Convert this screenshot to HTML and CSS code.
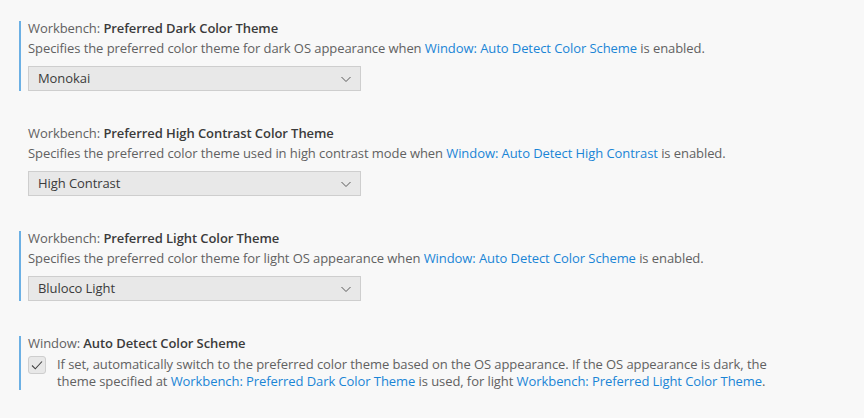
FILE: index.html
```html
<!DOCTYPE html>
<html>
<head>
<meta charset="utf-8">
<link rel="stylesheet" href="styles.css">
</head>
<body>
<div class="settings">
  <div class="setting modified">
    <div class="title"><span class="cat">Workbench: </span><span class="key">Preferred Dark Color Theme</span></div>
    <div class="desc">Specifies the preferred color theme for dark OS appearance when <span class="link">Window: Auto Detect Color Scheme</span> is enabled.</div>
    <div class="select"><span>Monokai</span><svg class="chev" width="16" height="16" viewBox="0 0 16 16"><path d="M3.5 6 L8 10.5 L12.5 6" fill="none" stroke="#5a5a5a" stroke-width="1"/></svg></div>
  </div>
  <div class="setting">
    <div class="title"><span class="cat">Workbench: </span><span class="key">Preferred High Contrast Color Theme</span></div>
    <div class="desc">Specifies the preferred color theme used in high contrast mode when <span class="link">Window: Auto Detect High Contrast</span> is enabled.</div>
    <div class="select"><span>High Contrast</span><svg class="chev" width="16" height="16" viewBox="0 0 16 16"><path d="M3.5 6 L8 10.5 L12.5 6" fill="none" stroke="#5a5a5a" stroke-width="1"/></svg></div>
  </div>
  <div class="setting modified">
    <div class="title"><span class="cat">Workbench: </span><span class="key">Preferred Light Color Theme</span></div>
    <div class="desc">Specifies the preferred color theme for light OS appearance when <span class="link">Window: Auto Detect Color Scheme</span> is enabled.</div>
    <div class="select"><span>Bluloco Light</span><svg class="chev" width="16" height="16" viewBox="0 0 16 16"><path d="M3.5 6 L8 10.5 L12.5 6" fill="none" stroke="#5a5a5a" stroke-width="1"/></svg></div>
  </div>
  <div class="setting modified last">
    <div class="title"><span class="cat">Window: </span><span class="key">Auto Detect Color Scheme</span></div>
    <div class="check-row">
      <div class="checkbox"><svg width="16" height="16" viewBox="0 0 16 16"><path d="M3 8.5 L6.3 11.8 L13 4.5" fill="none" stroke="#424242" stroke-width="1.1"/></svg></div>
      <div class="check-text">If set, automatically switch to the preferred color theme based on the OS appearance. If the OS appearance is dark, the<br>theme specified at <span class="link">Workbench: Preferred Dark Color Theme</span> is used, for light <span class="link">Workbench: Preferred Light Color Theme</span>.</div>
    </div>
  </div>
</div>
</body>
</html>
```
FILE: styles.css
```css
html, body {
  margin: 0;
  padding: 0;
  background: #f8f8f8;
}
body {
  font-family: "Segoe UI", "Open Sans", "Liberation Sans", sans-serif;
  font-size: 13px;
  letter-spacing: -0.075px;
  color: #616161;
  width: 864px;
  height: 418px;
  overflow: hidden;
}
.settings {
  padding: 21px 0 0 19px;
  display: flex;
  flex-direction: column;
  gap: 35px;
}
.setting {
  border-left: 2px solid transparent;
  padding-left: 7px;
  display: flex;
  flex-direction: column;
}
.setting.modified {
  border-left-color: #6cb0e4;
}
.title {
  height: 15px;
  line-height: 15px;
  white-space: nowrap;
}
.cat {
  color: #616161;
}
.key {
  color: #3b3b3b;
  font-weight: 600;
}
.desc {
  margin-top: 3px;
  line-height: 18px;
  white-space: nowrap;
}
.link {
  color: #1a85d6;
}
.select {
  margin-top: 9px;
  width: 333px;
  height: 25px;
  box-sizing: border-box;
  border: 1px solid #cecece;
  background: #e8e8e8;
  display: flex;
  align-items: center;
  justify-content: space-between;
  padding-left: 9px;
  color: #3b3b3b;
}
.select span {
  line-height: 23px;
}
.chev {
  margin-right: 6px;
}
.check-row {
  margin-top: 5px;
  display: flex;
  gap: 11px;
}
.checkbox {
  width: 18px;
  height: 18px;
  box-sizing: border-box;
  border: 1px solid #cecece;
  background: #e8e8e8;
  border-radius: 3px;
  flex: none;
  display: flex;
  align-items: center;
  justify-content: center;
}
.check-text {
  line-height: 17px;
  white-space: nowrap;
}
```
